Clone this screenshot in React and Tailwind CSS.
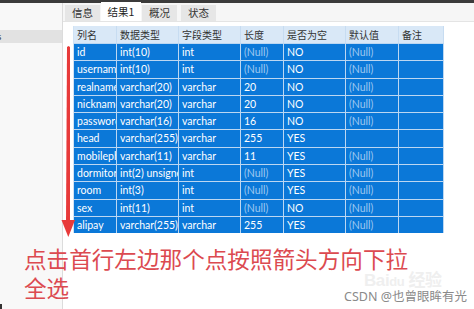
import React from 'react';

const cols = [43, 62, 62, 43, 62, 53, 45];
const headers = ['列名', '数据类型', '字段类型', '长度', '是否为空', '默认值', '备注'];
const N = '(Null)';
const rows = [
  ['id', 'int(10)', 'int', N, 'NO', N, ''],
  ['username', 'int(10)', 'int', N, 'NO', N, ''],
  ['realname', 'varchar(20)', 'varchar', '20', 'NO', N, ''],
  ['nickname', 'varchar(20)', 'varchar', '20', 'NO', N, ''],
  ['password', 'varchar(16)', 'varchar', '16', 'NO', N, ''],
  ['head', 'varchar(255)', 'varchar', '255', 'YES', '', ''],
  ['mobilephone', 'varchar(11)', 'varchar', '11', 'YES', N, ''],
  ['dormitory', 'int(2) unsigned', 'int', N, 'YES', N, ''],
  ['room', 'int(3)', 'int', N, 'YES', N, ''],
  ['sex', 'int(11)', 'int', N, 'NO', N, ''],
  ['alipay', 'varchar(255)', 'varchar', '255', 'YES', N, ''],
];

const font = { fontFamily: 'Lato, "Noto Sans CJK SC", sans-serif' };
const cjk = { fontFamily: '"Noto Sans CJK SC", sans-serif' };

function Tab({ label, active }) {
  return (
    <div
      style={cjk}
      className={
        active
          ? 'h-[19px] w-[40px] bg-white flex items-center justify-center text-[10.5px] text-[#222]'
          : 'h-[16px] w-[35px] bg-[#e6e6e6] flex items-center justify-center text-[10.5px] text-[#333]'
      }
    >
      {label}
    </div>
  );
}

export default function App() {
  return (
    <div className="relative w-[474px] h-[309px] overflow-hidden bg-white" style={font}>
      <div className="h-[3px] bg-[#3b3b3b]" />
      <div className="flex h-[306px]">
        {/* left tree panel */}
        <div className="w-[63px] shrink-0 bg-[#f8f8f8] border-r border-[#dcdcdc] pt-[27px]">
          <div className="h-[13px] bg-[#e2e2e2] text-[10px] leading-[13px] text-[#333] -ml-[3px]">s</div>
        </div>

        <div className="flex-1 flex flex-col">
          {/* tabs */}
          <div className="h-[19px] bg-[#f6f6f6] border-b border-[#e4e4e4] flex items-end gap-[1px] pl-[2px]">
            <Tab label="信息" />
            <Tab label="结果1" active />
            <Tab label="概况" />
            <div className="w-[2px]" />
            <Tab label="状态" />
          </div>

          {/* table */}
          <div className="pl-[10px] pt-[4px]">
            <div className="border-l border-[#cfe2f5] w-fit">
              <div className="flex h-[17px] bg-[#d9e8f7]" style={cjk}>
                {headers.map((h, i) => (
                  <div
                    key={h}
                    style={{ width: cols[i] }}
                    className="border-r border-[#c7dcf1] pl-[3px] text-[10px] leading-[17px] text-[#333] whitespace-nowrap overflow-hidden"
                  >
                    {h}
                  </div>
                ))}
              </div>
              {rows.map((r, ri) => (
                <div key={ri} className="flex h-[17.3px] bg-[#0b78d8] border-t border-[#bcd7f2]">
                  {r.map((c, i) => (
                    <div
                      key={i}
                      style={{ width: cols[i] }}
                      className={
                        'border-r border-[#bcd7f2] pl-[3px] text-[10.5px] leading-[16px] whitespace-nowrap overflow-hidden ' +
                        (c === N ? 'text-[#9ec8f0]' : 'text-white')
                      }
                    >
                      {c}
                    </div>
                  ))}
                </div>
              ))}
            </div>
          </div>
        </div>
      </div>

      {/* row indicator dots */}
      {[51, 68, 86, 103, 120].map((y) => (
        <div key={y} className="absolute left-[68px] w-[2px] h-[3px] bg-[#111]" style={{ top: y }} />
      ))}

      {/* red arrow annotation */}
      <svg className="absolute left-0 top-0" width="474" height="309">
        <path d="M67 47 L68.5 46 L70 47 L70 222 L66 222 Z" fill="#e83a3a" />
        <polygon points="61.5,220 75,220 68.3,237" fill="#e83a3a" />
      </svg>

      {/* caption */}
      <div
        className="absolute left-[24px] top-[244px] text-[22.6px] leading-[29px] text-[#dc4a50]"
        style={cjk}
      >
        <div>点击首行左边那个点按照箭头方向下拉</div>
        <div>全选</div>
      </div>

      {/* watermarks */}
      <div className="absolute left-[364px] top-[272px] text-[17px] leading-[18px] font-bold text-[#efefef] tracking-tight"
        style={{ fontFamily: '"Liberation Sans", "Noto Sans CJK SC", sans-serif' }}>
        Bai<span className="text-[13px]">du</span> 经验
      </div>
      <div
        className="absolute left-[344px] top-[290px] text-[12.5px] leading-[14px] text-[#8a8a8a]"
        style={{ fontFamily: '"Noto Sans", "Noto Sans CJK SC", sans-serif' }}
      >
        CSDN @也曾眼眸有光
      </div>
      <div className="absolute left-0 top-[304px] w-[2px] h-[5px] bg-[#333]" />
    </div>
  );
}
